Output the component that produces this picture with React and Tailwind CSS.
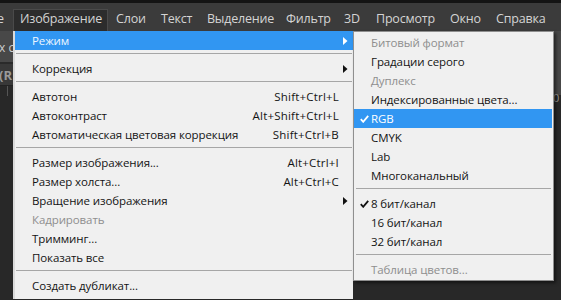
const font = { fontFamily: '"Open Sans", "Noto Sans", sans-serif' };

const topMenu = [
  ['Слои', 'w-[45px]'],
  ['Текст', 'w-[46px]'],
  ['Выделение', 'w-[79px]'],
  ['Фильтр', 'w-[58px]'],
  ['3D', 'w-[32px]'],
  ['Просмотр', 'w-[74px]'],
  ['Окно', 'w-[46px]'],
  ['Справка', 'w-[60px]'],
];

const mainItems = [
  { label: 'Режим', arrow: true, active: true },
  { sep: true },
  { label: 'Коррекция', arrow: true },
  { sep: true },
  { label: 'Автотон', keys: 'Shift+Ctrl+L' },
  { label: 'Автоконтраст', keys: 'Alt+Shift+Ctrl+L' },
  { label: 'Автоматическая цветовая коррекция', keys: 'Shift+Ctrl+B' },
  { sep: true },
  { label: 'Размер изображения...', keys: 'Alt+Ctrl+I' },
  { label: 'Размер холста...', keys: 'Alt+Ctrl+C' },
  { label: 'Вращение изображения', arrow: true },
  { label: 'Кадрировать', disabled: true },
  { label: 'Тримминг...' },
  { label: 'Показать все' },
  { sep: true },
  { label: 'Создать дубликат...' },
];

const subItems = [
  { label: 'Битовый формат', disabled: true },
  { label: 'Градации серого' },
  { label: 'Дуплекс', disabled: true },
  { label: 'Индексированные цвета...' },
  { label: 'RGB', checked: true, active: true },
  { label: 'CMYK' },
  { label: 'Lab' },
  { label: 'Многоканальный' },
  { sep: true },
  { label: '8 бит/канал', checked: true },
  { label: '16 бит/канал' },
  { label: '32 бит/канал' },
  { sep: true },
  { label: 'Таблица цветов...', disabled: true },
];

function Arrow({ white }) {
  return (
    <svg width="5" height="8" viewBox="0 0 5 8" className="shrink-0">
      <path d="M0 0 L4.5 4 L0 8 Z" fill={white ? '#ffffff' : '#111111'} />
    </svg>
  );
}

function Check({ white }) {
  return (
    <svg width="9" height="8" viewBox="0 0 9 8">
      <path d="M0.8 4.2 L3.2 6.8 L8.2 0.8" stroke={white ? '#ffffff' : '#111111'} strokeWidth="1.8" fill="none" />
    </svg>
  );
}

function Sep({ inset }) {
  return (
    <div className={`h-[9px] flex items-start pt-[3px] ${inset}`}>
      <div className="w-full h-px bg-[#a6a6a6]" />
    </div>
  );
}

function MainMenu() {
  return (
    <div className="absolute left-[13px] top-[31px] w-[340px] bg-[#f0f0f0] border-l-[2px] border-[#dadada] pb-[4px] text-[11.5px] tracking-[-0.1px]">
      {mainItems.map((it, i) =>
        it.sep ? (
          <Sep key={i} inset="pl-[1px] pr-[1px]" />
        ) : (
          <div
            key={i}
            className={`h-[19px] flex items-center pl-[17px] pr-[5px] ${
              it.active ? 'bg-[#3196f2] text-[#eef6ff]' : it.disabled ? 'text-[#8e8e8e]' : 'text-[#141414]'
            }`}
          >
            <span className="flex-1 whitespace-nowrap">{it.label}</span>
            {it.keys && <span className="whitespace-nowrap mr-[9px] tracking-[0.2px]">{it.keys}</span>}
            {it.arrow && <Arrow white={it.active} />}
          </div>
        )
      )}
    </div>
  );
}

function SubMenu() {
  return (
    <div className="absolute left-[353px] top-[31px] w-[201px] h-[250px] bg-[#f0f0f0] border border-[#8f8f8f] pt-px shadow-[2px_2px_3px_rgba(0,0,0,0.5)] text-[11.5px] tracking-[-0.1px]">
      {subItems.map((it, i) =>
        it.sep ? (
          <Sep key={i} inset="px-[2px]" />
        ) : (
          <div
            key={i}
            className={`h-[19px] flex items-center mr-[1px] ${
              it.active ? 'bg-[#3196f2] text-white' : it.disabled ? 'text-[#8e8e8e]' : 'text-[#141414]'
            }`}
          >
            <span className="w-[17px] flex justify-center pl-[3px]">{it.checked && <Check white={it.active} />}</span>
            <span className="whitespace-nowrap">{it.label}</span>
          </div>
        )
      )}
    </div>
  );
}

export default function App() {
  return (
    <div className="relative w-[561px] h-[300px] overflow-hidden bg-[#282828]" style={font}>
      <div className="h-[3px] bg-[#141414]" />
      <div className="h-[28px] bg-[#3b3b3b] flex items-end text-[12.5px] tracking-[-0.2px] text-[#d4d4d4]">
        <div className="w-[13px] h-[22px] overflow-hidden flex items-center pb-[2px]">
          <span className="-ml-[3px]">е</span>
        </div>
        <div className="h-[22px] w-[95px] bg-[#2c2c2c] border border-b-0 border-[#4a4a4a] flex items-center pl-[6px] pb-[2px]">
          Изображение
        </div>
        <div className="flex h-[22px] items-center pb-[2px] pl-[8px] whitespace-nowrap">
          {topMenu.map(([m, w]) => (
            <span key={m} className={w}>
              {m}
            </span>
          ))}
        </div>
      </div>
      <div className="h-[33px] bg-[#484848] border-b-[2px] border-[#2a2a2a] flex items-center pt-[3px] text-[12px] text-[#cfcfcf]">
        <span className="-ml-[1px]">х с</span>
      </div>
      <div className="h-[22px] bg-[#383838] border-b border-[#222] flex items-center pt-[2px] text-[13px] font-bold text-[#9a9a9a]">
        <span className="-ml-[1px]">(R</span>
      </div>
      <div className="flex h-[10px]">
        <div className="w-[8px] border-r border-[#555]" />
      </div>
      <div className="absolute right-0 top-[31px] w-[8px] h-[64px] bg-[#474747]" />
      <div className="absolute right-0 top-[92px] w-[8px] text-[11px] text-[#9a9a9a] leading-none">0</div>
      <MainMenu />
      <SubMenu />
    </div>
  );
}
